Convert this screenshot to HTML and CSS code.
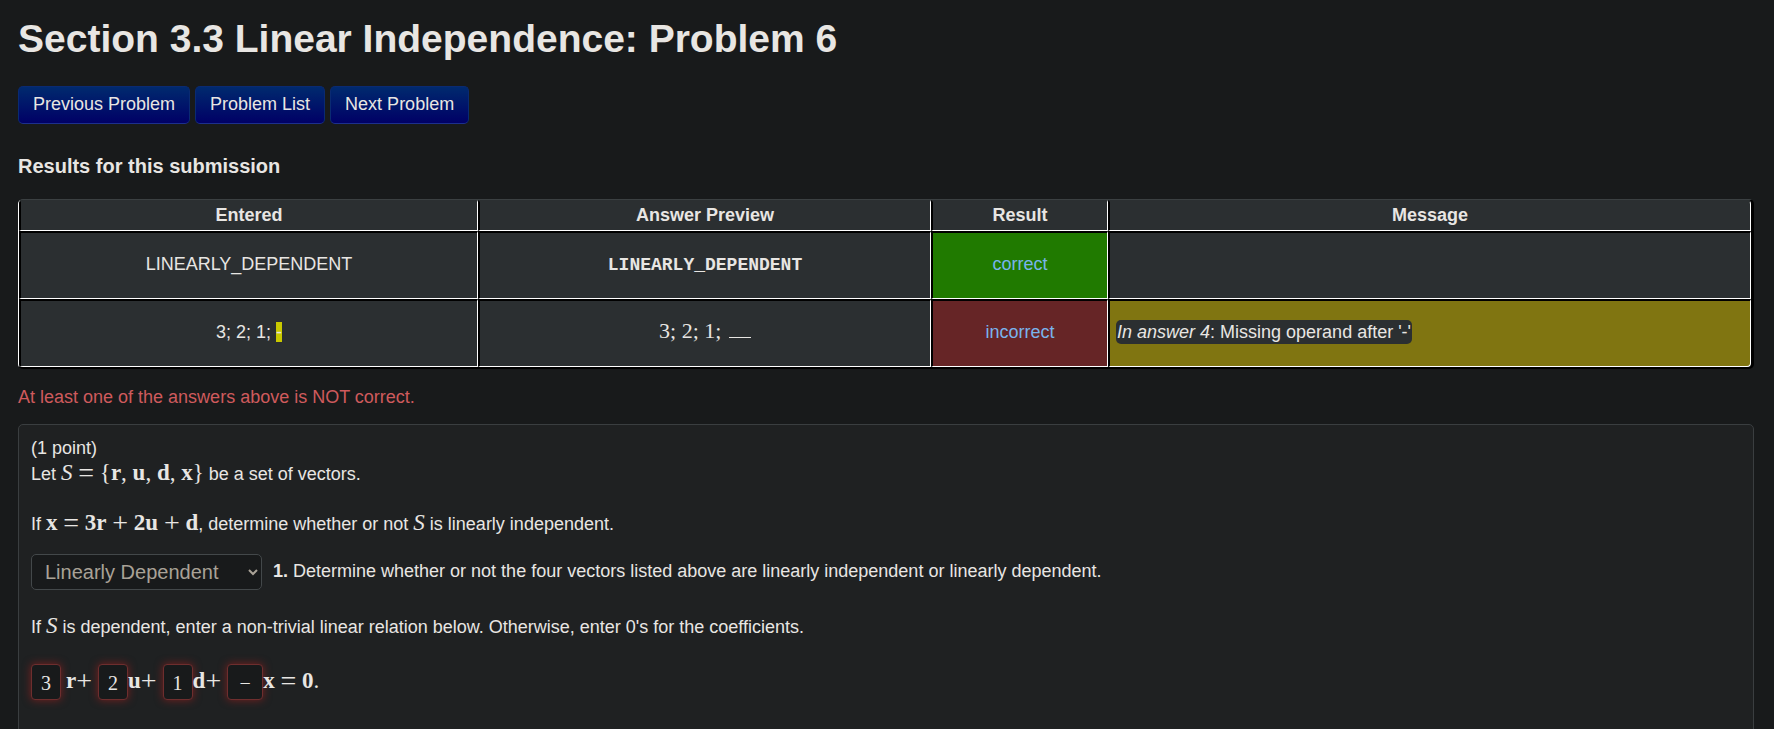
FILE: index.html
```html
<!DOCTYPE html>
<html lang="en">
<head>
    <meta charset="UTF-8">
    <meta name="viewport" content="width=device-width, initial-scale=1.0">
    <title>Section 3.3 Linear Independence: Problem 6</title>
    <link rel="stylesheet" href="styles.css">
</head>
<body>

<div class="container">
    <h1>Section 3.3 Linear Independence: Problem 6</h1>

    <!-- Problem navigation -->
    <nav class="problem-nav">
        <a class="nav-button" href="#previous">Previous Problem</a>
        <a class="nav-button" href="#list">Problem List</a>
        <a class="nav-button" href="#next">Next Problem</a>
    </nav>

    <!-- Submission results -->
    <h3>Results for this submission</h3>
    <table class="results">
        <colgroup>
            <col class="col-entered">
            <col class="col-preview">
            <col class="col-result">
            <col class="col-message">
        </colgroup>
        <thead>
            <tr>
                <th>Entered</th>
                <th>Answer Preview</th>
                <th>Result</th>
                <th>Message</th>
            </tr>
        </thead>
        <tbody>
            <tr>
                <td>LINEARLY_DEPENDENT</td>
                <td><span class="typewriter">LINEARLY_DEPENDENT</span></td>
                <td class="correct"><a href="#answer1">correct</a></td>
                <td></td>
            </tr>
            <tr>
                <td>3; 2; 1; <span class="parse-error">-</span></td>
                <td><span class="math preview">3; 2; 1; <span class="blank"></span></span></td>
                <td class="incorrect"><a href="#answer2">incorrect</a></td>
                <td class="warning"><span class="message"><i>In answer 4</i>: Missing operand after '-'</span></td>
            </tr>
        </tbody>
    </table>

    <p class="summary">At least one of the answers above is NOT correct.</p>

    <!-- Problem body -->
    <form class="problem">
        <p>(1 point)<br>
        Let <span class="math"><i>S</i> <span class="op">=</span> {<b>r</b>, <b>u</b>, <b>d</b>, <b>x</b>}</span> be a set of vectors.</p>

        <p>If <span class="math"><b>x</b> <span class="op">=</span> <b>3r</b> <span class="op">+</span> <b>2u</b> <span class="op">+</span> <b>d</b></span>, determine whether or not <span class="math"><i>S</i></span> is linearly independent.</p>

        <div class="choice">
            <select id="answer1" class="answer-select">
                <option>Linearly Dependent</option>
                <option>Linearly Independent</option>
            </select>
            <label for="answer1"><b>1.</b> Determine whether or not the four vectors listed above are linearly independent or linearly dependent.</label>
        </div>

        <p>If <span class="math"><i>S</i></span> is dependent, enter a non-trivial linear relation below. Otherwise, enter 0's for the coefficients.</p>

        <div class="relation math" id="answer2">
            <input type="text" id="coef_r" class="coef" value="3">
            <label for="coef_r" class="first-term"><b>r</b><span class="op">+</span></label>
            <input type="text" id="coef_u" class="coef" value="2">
            <label for="coef_u"><b>u</b><span class="op">+</span></label>
            <input type="text" id="coef_d" class="coef" value="1">
            <label for="coef_d"><b>d</b><span class="op">+</span></label>
            <input type="text" id="coef_x" class="coef coef-wide" value="−">
            <label for="coef_x"><b>x</b> <span class="op">=</span> <b>0</b>.</label>
        </div>
    </form>
</div>

</body>
</html>
```
FILE: styles.css
```css
body { margin: 0; background-color: #181a1b; color: #e8e6e3; font-family: Arial, "Liberation Sans", sans-serif; font-size: 18px; line-height: 25px; }
.container { padding: 14px 20px 0 18px; }
h1 { margin: 0 0 22px; font-size: 39px; line-height: 50px; }
h3 { margin: 0 0 20px; font-size: 20px; line-height: 25px; }
p { margin: 0 0 24px; }

.problem-nav { display: flex; gap: 5px; margin-bottom: 30px; }
.nav-button { padding: 5px 14px 6px; border: 1px solid #0a2a72; border-bottom-color: #1c2f8c; border-radius: 5px; background: linear-gradient(#002a6e, #000066); color: #e8e6e3; text-decoration: none; }

.results { width: 100%; table-layout: fixed; border-collapse: separate; border-spacing: 0; border: 1px solid #3b4042; border-left-color: #fff; border-right: 3px solid #000; border-bottom: 2px solid #000; border-radius: 5px; background-color: #2b2f31; overflow: hidden; text-align: center; }
.results th, .results td { padding: 0 6px 2px; border-top: 2px solid #000; border-left: 2px solid #000; border-right: 1px solid #fff; border-bottom: 1px solid #fff; }
.results th { height: 26px; border-top-color: #2b2f31; }
.results td { height: 63px; }
.results th:last-child { border-top-right-radius: 4px; }
.results tr:last-child td:last-child { border-bottom-right-radius: 4px; }
.col-entered { width: 459px; }
.col-preview { width: 453px; }
.col-result { width: 177px; }
.results a { color: #7ab4ec; text-decoration: none; }
.results .correct { background-color: #207a00; }
.results .incorrect { background-color: #662526; }
.results .warning { background-color: #807511; text-align: left; }
.parse-error { background-color: #c9c900; }
.message { padding: 2px 1px; border-radius: 5px; background-color: #2b2f31; }
.typewriter { font-family: "Liberation Mono", monospace; font-weight: bold; }
.blank { display: inline-block; width: 22px; margin-left: 2px; border-bottom: 1px solid #e8e6e3; }

.summary { margin: 16px 0 14px; color: #cf5a5d; }

.math { font-family: "Liberation Serif", serif; font-size: 23px; line-height: 1; }
.preview { font-size: 22px; }
.op { font-size: 28px; line-height: 0; vertical-align: -2px; }

.problem { padding: 11px 12px 60px; border: 1px solid #3a3e40; border-radius: 5px; background-color: #1f2122; }
.choice { display: flex; align-items: center; gap: 11px; margin: -7px 0 24px; }
.choice label { padding-bottom: 2px; }
.answer-select { width: 231px; height: 36px; padding: 0 11px 0 9px; border: 1px solid #43484a; border-radius: 5px; background-color: #181a1b; color: #a9a297; font: 20px Arial, "Liberation Sans", sans-serif; }
.relation { display: flex; align-items: center; }
.relation label { padding-bottom: 4px; }
.coef { box-sizing: border-box; width: 30px; height: 36px; margin-left: 6px; padding: 2px 0 0; border: 1px solid #6e2e2e; border-radius: 4px; background-color: #181a1b; box-shadow: 0 0 8px #7a2020; color: #e8e6e3; font: 20px "Liberation Serif", serif; text-align: center; }
.coef:first-child { margin-left: 0; }
.coef-wide { width: 36px; }
.first-term { margin-left: 5px; }
```
